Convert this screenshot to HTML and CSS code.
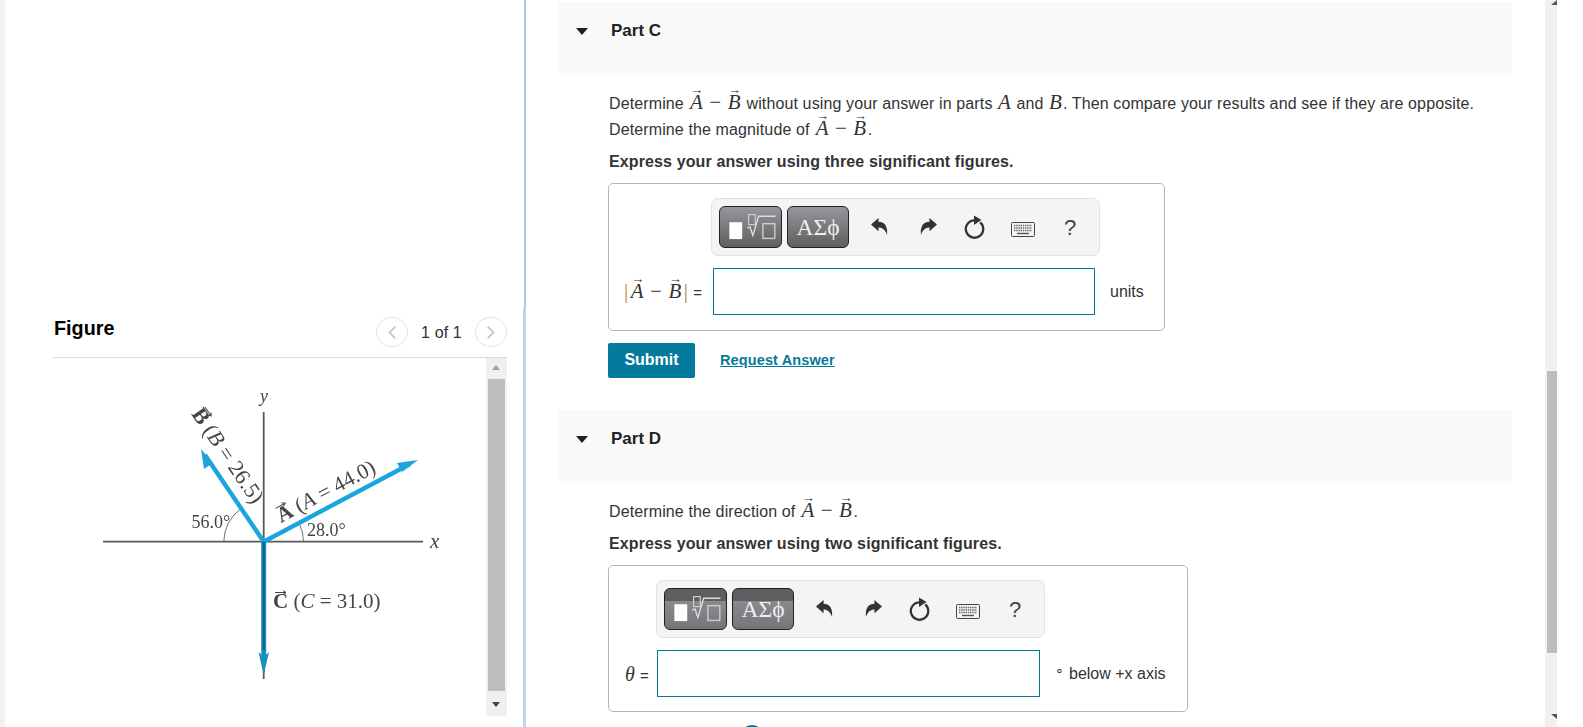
FILE: index.html
```html
<!DOCTYPE html>
<html lang="en">
<head>
<meta charset="utf-8">
<title>Part C and Part D</title>
<link rel="stylesheet" href="styles.css">
</head>
<body>
<svg class="defs" aria-hidden="true">
  <symbol id="i-undo" viewBox="0 0 18 20"><path d="M0 8 8 1V5C14 5 18 9 17 19 15 13 12 11 8 11V15Z"/></symbol>
  <symbol id="i-redo" viewBox="0 0 18 20"><path d="M18 8 10 1V5C4 5 0 9 1 19 3 13 6 11 10 11V15Z"/></symbol>
  <symbol id="i-reset" viewBox="0 0 22 24"><path d="M10.500 5.300A8.700 8.700 0 1 0 16.200 7.400" fill="none" stroke="#333" stroke-width="2.300"/><path d="M10 .5 17.500 5 10 10Z"/></symbol>
  <symbol id="i-keys" viewBox="0 0 24 15"><rect x=".5" y=".5" width="23" height="14" rx="1" fill="#f4f4f4" stroke="#444"/><path d="M3 3.500H21M3 6H21M3 8.500H21" stroke="#666" stroke-width="1.400" stroke-dasharray="1.400 .8"/><path d="M6 11.500H18" stroke="#555" stroke-width="1.400"/></symbol>
  <symbol id="i-tpl" viewBox="0 0 63 42"><rect x="9.300" y="16" width="13.500" height="17.700" fill="#fff"/><rect x="29.500" y="8" width="7" height="10.500" fill="none" stroke="#ccc" stroke-width="1.300"/><path d="M28 22 31 21 34 30 40 9.700H57.700" fill="none" stroke="#ddd" stroke-width="1.400"/><rect x="44.500" y="17.500" width="12.500" height="15.500" fill="none" stroke="#ccc" stroke-width="1.500"/></symbol>
</svg>

<div class="page">
  <div class="rail"></div>

  <aside class="left">
    <header class="fig-head">
      <h2 class="fig-title">Figure</h2>
      <nav class="pager">
        <span class="circle"><svg class="chev" viewBox="0 0 12 18"><path d="M10 2 3 9 10 16"/></svg></span>
        <span class="count">1 of 1</span>
        <span class="circle"><svg class="chev" viewBox="0 0 12 18"><path d="M2 2 9 9 2 16"/></svg></span>
      </nav>
    </header>
    <div class="fig-view">
      <div class="fig-canvas">
        <svg class="diagram" viewBox="53 358 433 358" role="img" aria-label="Vector diagram">
          <g class="axis">
            <line x1="103" y1="541.700" x2="423" y2="541.700"/>
            <line x1="263.700" y1="412" x2="263.700" y2="679"/>
          </g>
          <g class="arc">
            <path d="M303.500 541.700A40 40 0 0 0 299 523"/>
            <path d="M223.800 541.700A40 40 0 0 1 241.300 508.500"/>
          </g>
          <g class="vec-a">
            <line x1="263.700" y1="541.700" x2="410" y2="464"/>
            <line x1="263.700" y1="541.700" x2="205" y2="455"/>
          </g>
          <line class="vec-c" x1="263.700" y1="541.700" x2="263.700" y2="660"/>
          <line class="vec-core" x1="263.700" y1="541.700" x2="263.700" y2="650"/>
          <path class="head" d="M418 460 397 463 402 472Z"/>
          <path class="head" d="M201 449 204 469 213 463Z"/>
          <path class="head-c" d="M263.700 675 258.500 652 263.700 657 269 652Z"/>
          <text class="lbl" x="191.500" y="527.500">56.0°</text>
          <text class="lbl" x="307" y="536">28.0°</text>
          <text class="lbl ital" x="260" y="402">y</text>
          <text class="lbl ital big" x="430" y="548">x</text>
          <g transform="translate(273 608)">
            <text class="lbl big"><tspan class="bold">C</tspan> (<tspan class="ital">C</tspan> = 31.0)</text>
            <path class="over" d="M2 -15.500H13M10 -17.500 13 -15.500 10 -13.500"/>
          </g>
          <g transform="translate(281 523) rotate(-28)">
            <text class="lbl big wide"><tspan class="bold">A</tspan> (<tspan class="ital">A</tspan> = 44.0)</text>
            <path class="over" d="M2 -15.500H13M10 -17.500 13 -15.500 10 -13.500"/>
          </g>
          <g transform="translate(191 414) rotate(55.800)">
            <text class="lbl big wider"><tspan class="bold">B</tspan> (<tspan class="ital">B</tspan> = 26.5)</text>
            <path class="over" d="M2 -15.500H13M10 -17.500 13 -15.500 10 -13.500"/>
          </g>
        </svg>
      </div>
      <div class="fig-scroll">
        <span class="tri tri-up"></span>
        <span class="fig-thumb"></span>
        <span class="tri tri-down"></span>
      </div>
    </div>
  </aside>

  <div class="divider"><span class="div-top"></span><span class="div-bottom"></span></div>

  <main class="main">
    <section class="part part-c">
      <header class="part-head"><span class="caret"></span><h3 class="part-title">Part C</h3></header>
      <div class="part-body">
        <p class="line">Determine <span class="m"><span class="v">A</span><span class="minus">−</span><span class="v">B</span></span> without using your answer in parts <span class="m"><i>A</i></span> and <span class="m"><i>B</i></span>. Then compare your results and see if they are opposite.</p>
        <p class="line">Determine the magnitude of <span class="m"><span class="v">A</span><span class="minus">−</span><span class="v">B</span></span>.</p>
        <p class="hint">Express your answer using three significant figures.</p>
        <div class="box box-c">
          <div class="toolbar tb-c">
            <button class="tool"><svg class="tpl"><use href="#i-tpl"/></svg></button>
            <button class="tool greek">ΑΣϕ</button>
            <svg class="ico ico-undo"><use href="#i-undo"/></svg>
            <svg class="ico ico-redo"><use href="#i-redo"/></svg>
            <svg class="ico ico-reset"><use href="#i-reset"/></svg>
            <svg class="ico ico-keys"><use href="#i-keys"/></svg>
            <span class="help">?</span>
          </div>
          <div class="answer">
            <span class="label label-c"><span class="m"><span class="bar">|</span><span class="v">A</span><span class="minus">−</span><span class="v">B</span><span class="bar">|</span></span> =</span>
            <span class="field"></span>
            <span class="unit">units</span>
          </div>
        </div>
        <div class="actions">
          <button class="submit">Submit</button>
          <a class="request" href="#">Request Answer</a>
        </div>
      </div>
    </section>

    <section class="part part-d">
      <header class="part-head"><span class="caret"></span><h3 class="part-title">Part D</h3></header>
      <div class="part-body">
        <p class="line">Determine the direction of <span class="m"><span class="v">A</span><span class="minus">−</span><span class="v">B</span></span>.</p>
        <p class="hint">Express your answer using two significant figures.</p>
        <div class="box box-d">
          <div class="toolbar tb-d">
            <button class="tool banded"><svg class="tpl"><use href="#i-tpl"/></svg></button>
            <button class="tool greek banded">ΑΣϕ</button>
            <svg class="ico ico-undo"><use href="#i-undo"/></svg>
            <svg class="ico ico-redo"><use href="#i-redo"/></svg>
            <svg class="ico ico-reset"><use href="#i-reset"/></svg>
            <svg class="ico ico-keys"><use href="#i-keys"/></svg>
            <span class="help">?</span>
          </div>
          <div class="answer">
            <span class="label label-d"><span class="m theta"><i>θ</i></span> =</span>
            <span class="field"></span>
            <span class="unit unit-d"><sup class="deg">∘</sup><span>below +x axis</span></span>
          </div>
        </div>
        <span class="spinner"></span>
      </div>
    </section>
  </main>

  <div class="page-scroll">
    <span class="tri-s tri-s-up"></span>
    <span class="page-thumb"></span>
    <span class="tri-s tri-s-down"></span>
  </div>
</div>
</body>
</html>
```
FILE: styles.css
```css
* { box-sizing: border-box; }
html, body { margin: 0; height: 100%; overflow: hidden; background: #fff; }
body { font-family: "Liberation Sans", Arial, sans-serif; font-size: 16px; letter-spacing: .12px; color: #333; }
.defs { display: none; }
.page { display: flex; height: 727px; width: 1583px; overflow: hidden; }

.rail { width: 5px; background: #f2f2f2; flex: none; }

/* left column */
.left { width: 518px; flex: none; padding: 0 16px 11px 48px; display: flex; flex-direction: column; justify-content: flex-end; }
.fig-head { display: flex; justify-content: space-between; height: 43px; padding-top: 1px; border-bottom: 1px solid #ddd; }
.fig-title { margin: 0 0 0 1px; font-size: 19.800px; letter-spacing: 0; line-height: 24px; color: #000; font-weight: bold; }
.pager { display: flex; align-items: flex-start; padding-top: 1px; }
.circle { width: 32px; height: 30px; border: 1px solid #e4e4e4; border-radius: 50%; display: flex; align-items: center; justify-content: center; }
.chev { width: 10px; height: 15px; }
.chev path { fill: none; stroke: #b9c4d0; stroke-width: 2; }
.count { width: 67px; text-align: center; line-height: 32px; }
.fig-view { display: flex; height: 358px; }
.fig-canvas { flex: 1; min-width: 0; }
.diagram { display: block; width: 433px; height: 358px; filter: blur(.35px); }
.axis line { stroke: #58595b; stroke-width: 1.800; }
.arc path { fill: none; stroke: #666; stroke-width: .9; }
.vec-a line { stroke: #1aa5dc; stroke-width: 4.400; }
.vec-c { stroke: #1a8fbd; stroke-width: 5; }
.vec-core { stroke: #0f6a8c; stroke-width: 2.500; }
.head { fill: #1aa5dc; }
.head-c { fill: #1a8fbd; }
.lbl { font-family: "Liberation Serif", serif; font-size: 18px; fill: #444; letter-spacing: 0; }
.big { font-size: 21px; }
.wide { font-size: 21.500px; }
.wider { font-size: 22px; }
.ital { font-style: italic; }
.bold { font-weight: bold; }
.over { fill: none; stroke: #444; stroke-width: 1; }

.fig-scroll { width: 21px; background: #f0f0f0; flex: none; display: flex; flex-direction: column; align-items: center; position: relative; padding: 21px 0 25px 0; }
.fig-thumb { width: 17px; flex: 1; background: #bdbdbd; }
.tri { position: absolute; left: 6px; width: 0; height: 0; border-left: 4.500px solid transparent; border-right: 4.500px solid transparent; }
.tri-up { top: 7px; border-bottom: 5px solid #a0a0a0; }
.tri-down { bottom: 9px; border-top: 5px solid #444; }

.divider { width: 3px; flex: none; display: flex; flex-direction: column; align-items: flex-end; }
.div-top { width: 2px; height: 308px; background: #b4c7dc; }
.div-bottom { width: 3px; flex: 1; background: #c3d3e4; }

/* main column */
.main { width: 986px; flex: none; padding: 2px 0 0 32px; }
.part-d { margin-top: 32px; }
.part-head { height: 71px; background: #f9f9f9; display: flex; align-items: flex-start; padding: 20px 0 0 18px; }
.caret { width: 0; height: 0; margin-top: 6px; border-left: 6.500px solid transparent; border-right: 6.500px solid transparent; border-top: 7px solid #222; }
.part-title { margin: 0 0 0 23px; font-size: 17px; letter-spacing: 0; line-height: 18px; font-weight: bold; color: #222; }
.part-body { padding: 18px 0 0 50px; position: relative; }
.line { margin: 0; padding-left: 1px; line-height: 26px; height: 26px; white-space: nowrap; }
.hint { margin: 7px 0 9px; padding-left: 1px; line-height: 24px; font-weight: bold; }

.m { font-family: "Liberation Serif", serif; font-size: 21px; line-height: 1; color: #333; letter-spacing: 0; }
.m.theta { font-size: 20px; }
.m i { font-style: italic; padding: 0 1px; }
.v { font-style: italic; position: relative; display: inline-block; padding: 0 1.500px; }
.v::before { content: "→"; position: absolute; left: 1px; right: 0; top: -9px; font-size: 13px; font-style: normal; line-height: 13px; text-align: center; }
.minus { margin: 0 5px; }
.bar { color: #b0803a; margin: 0 1px; }

.box { border: 1px solid #b5b5b5; border-radius: 5px; padding: 14px 0 0 15px; }
.box-c { width: 557px; height: 148px; }
.box-d { width: 580px; height: 147px; }
.toolbar { height: 58px; width: 389px; background: #f4f4f4; border: 1px solid #e2e2e2; border-radius: 7px; display: flex; align-items: center; padding: 0 0 1px 7px; position: relative; }
.tool { width: 63px; height: 42px; margin: 1px 5px 0 0; padding: 0; border: 1px solid #222; border-radius: 6px; background: linear-gradient(#96969c, #5f5f5f); display: block; }
.tb-c { margin-left: 87px; }
.tb-d { margin-left: 32px; }
.tool.greek { width: 62px; font-family: "Liberation Serif", serif; font-size: 23.500px; color: #eee; letter-spacing: 0; }
.tool.banded { background: linear-gradient(#5e5e60 0, #5e5e60 30%, #8a8a8e 31%, #76767a 100%); }
.tpl { width: 61px; height: 40px; display: block; }
.ico { fill: #333; flex: none; }
.ico-undo { width: 17px; height: 19px; margin-left: 17px; }
.ico-redo { width: 17px; height: 19px; margin-left: 32px; }
.ico-reset { width: 22px; height: 24px; margin-left: 27px; }
.ico-keys { width: 24px; height: 15px; margin-left: 25px; margin-top: 5px; }
.help { font-size: 22px; color: #444; margin: 2px 0 0 29px; line-height: 22px; }

.answer { display: flex; align-items: center; margin-top: 12px; height: 47px; }
.label { white-space: nowrap; flex: none; font-size: 15px; }
.label-c { width: 89px; margin-left: -1px; }
.label-d { width: 33px; }
.box-c .field { margin-left: 1px; }
.field { height: 47px; width: 382px; border: 1px solid #007a9c; background: #fff; flex: none; }
.box-d .field { width: 383px; }
.unit { margin: 1px 0 0 15px; font-size: 16px; letter-spacing: 0; white-space: nowrap; }
.unit-d { display: flex; align-items: center; }
.deg { font-size: 14px; line-height: 1; margin: -8px 5px 0 0; }

.actions { display: flex; align-items: center; margin-top: 12px; height: 35px; }
.submit { width: 87px; height: 35px; border: 0; border-radius: 2px; padding: 0 0 2px; background: #047a9c; color: #fff; font: bold 16px "Liberation Sans", Arial, sans-serif; }
.request { margin: -2px 0 0 25px; font-weight: bold; font-size: 14.500px; color: #047a9c; }

.spinner { position: absolute; left: 182px; top: 244px; width: 24px; height: 24px; border: 4px solid #047a9c; border-radius: 50%; }

/* page scrollbar */
.page-scroll { width: 12px; margin-left: 33px; flex: none; background: #f0f0f0; position: relative; padding: 371px 0 74px 2px; display: flex; }
.page-thumb { flex: 1; background: #bdbdbd; }
.tri-s { position: absolute; right: 0; width: 0; height: 0; border-left: 6px solid transparent; }
.tri-s-up { top: 0; border-bottom: 5px solid #555; }
.tri-s-down { bottom: 8px; border-top: 5px solid #555; }
```
